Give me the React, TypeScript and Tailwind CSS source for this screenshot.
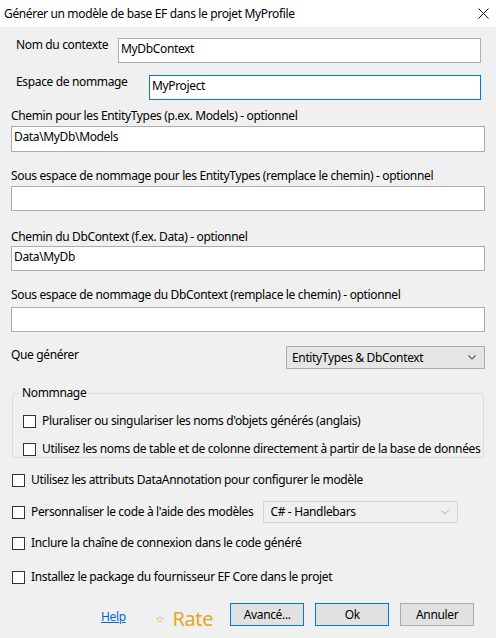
import React from 'react';

const font = { fontFamily: '"Noto Sans", "Liberation Sans", sans-serif', letterSpacing: '-0.35px' };

function TextBox({ value, focused, className = '' }: { value?: string; focused?: boolean; className?: string }) {
  return (
    <div
      className={`h-[25px] bg-white border px-[2px] pt-[2px] text-[12px] leading-[16px] text-black ${
        focused ? 'border-[#0078d7]' : 'border-[#abadb3]'
      } ${className}`}
    >
      {value}
    </div>
  );
}

function Check({ label }: { label: string }) {
  return (
    <div className="flex items-center h-[16px]">
      <div className="w-[13px] h-[13px] bg-white border border-[#333333] shrink-0" />
      <span className="ml-[6px] text-[12px] leading-[16px] whitespace-nowrap">{label}</span>
    </div>
  );
}

function Chevron({ color = '#606060' }: { color?: string }) {
  return (
    <svg width="8" height="5" viewBox="0 0 8 5" className="shrink-0">
      <path d="M0.5 0.5 L4 4 L7.5 0.5" fill="none" stroke={color} strokeWidth="1.2" />
    </svg>
  );
}

export default function App() {
  return (
    <div className="w-[496px] h-[638px] bg-[#f0f0f0] text-black overflow-hidden" style={font}>
      {/* barre de titre */}
      <div className="h-[27px] bg-white flex items-center justify-between pl-[4px] pr-[7px]">
        <span className="text-[12px] leading-[16px]">Générer un modèle de base EF dans le projet MyProfile</span>
        <svg width="11" height="11" viewBox="0 0 11 11">
          <path d="M0.5 0.5 L10.5 10.5 M10.5 0.5 L0.5 10.5" stroke="#111" strokeWidth="1" />
        </svg>
      </div>

      <div className="px-[11px] text-[12px] leading-[16px]">
        {/* nom du contexte */}
        <div className="flex items-start mt-[11px]">
          <span className="ml-[5px] mt-[-1px] w-[102px]">Nom du contexte</span>
          <TextBox value="MyDbContext" className="flex-1 mr-[4px]" />
        </div>
        <div className="flex items-start mt-[12px]">
          <span className="ml-[5px] mt-[-1px] w-[133px]">Espace de nommage</span>
          <TextBox value="MyProject" focused className="flex-1 mr-[4px]" />
        </div>

        <div className="mt-[8px]">Chemin pour les EntityTypes (p.ex. Models) - optionnel</div>
        <TextBox value="Data\MyDb\Models" className="mt-[2px] h-[26px]" />

        <div className="mt-[16px]">Sous espace de nommage pour les EntityTypes (remplace le chemin) - optionnel</div>
        <TextBox className="mt-[2px]" />

        <div className="mt-[18px]">Chemin du DbContext (f.ex. Data) - optionnel</div>
        <TextBox value="Data\MyDb" className="mt-[1px]" />

        <div className="mt-[16px]">Sous espace de nommage du DbContext (remplace le chemin) - optionnel</div>
        <TextBox className="mt-[4px]" />

        {/* que generer */}
        <div className="flex items-start justify-between mt-[14px]">
          <span className="mt-[1px]">Que générer</span>
          <div className="w-[199px] h-[23px] bg-[#e5e5e5] border border-[#acacac] flex items-center justify-between pl-[5px] pr-[8px]">
            <span>EntityTypes &amp; DbContext</span>
            <Chevron />
          </div>
        </div>

        {/* groupe nommage */}
        <div className="relative mt-[24px] ml-[1px] mr-[1px] h-[65px] border border-[#dcdcdc] rounded-[3px] pl-[10px] pt-[19px]">
          <span className="absolute left-[7px] top-[-9px] bg-[#f0f0f0] px-[2px]">Nommnage</span>
          <Check label="Pluraliser ou singulariser les noms d'objets générés (anglais)" />
          <div className="mt-[12px]">
            <Check label="Utilisez les noms de table et de colonne directement à partir de la base de données" />
          </div>
        </div>

        {/* options */}
        <div className="ml-[1px] mt-[14px] flex flex-col">
          <Check label="Utilisez les attributs DataAnnotation pour configurer le modèle" />
          <div className="flex items-center mt-[13px]">
            <Check label="Personnaliser le code à l'aide des modèles" />
            <div className="ml-[10px] w-[195px] h-[22px] bg-[#efefef] border border-[#d4d4d4] flex items-center justify-between pl-[6px] pr-[8px]">
              <span>C# - Handlebars</span>
              <Chevron color="#c4c4c4" />
            </div>
          </div>
          <div className="mt-[12px]">
            <Check label="Inclure la chaîne de connexion dans le code généré" />
          </div>
          <div className="mt-[18px]">
            <Check label="Installez le package du fournisseur EF Core dans le projet" />
          </div>
        </div>

        {/* boutons */}
        <div className="flex items-center mt-[18px] h-[23px]">
          <span className="ml-[90px] text-[#0066cc] underline mt-[4px]">Help</span>
          <span className="ml-[29px] mt-[8px] flex items-center text-[#e2a826]">
            <span className="text-[11px] leading-[12px]">☆</span>
            <span className="ml-[8px] text-[20px] leading-[24px]">Rate</span>
          </span>
          <button className="ml-[17px] w-[74px] h-[23px] bg-[#e1e1e1] border border-[#0078d7] text-[12px]">
            Avancé...
          </button>
          <button className="ml-[11px] w-[74px] h-[23px] bg-[#e1e1e1] border border-[#0078d7] text-[12px]">
            Ok
          </button>
          <button className="ml-[11px] w-[74px] h-[23px] bg-[#e1e1e1] border border-[#adadad] text-[12px]">
            Annuler
          </button>
        </div>
      </div>
    </div>
  );
}
